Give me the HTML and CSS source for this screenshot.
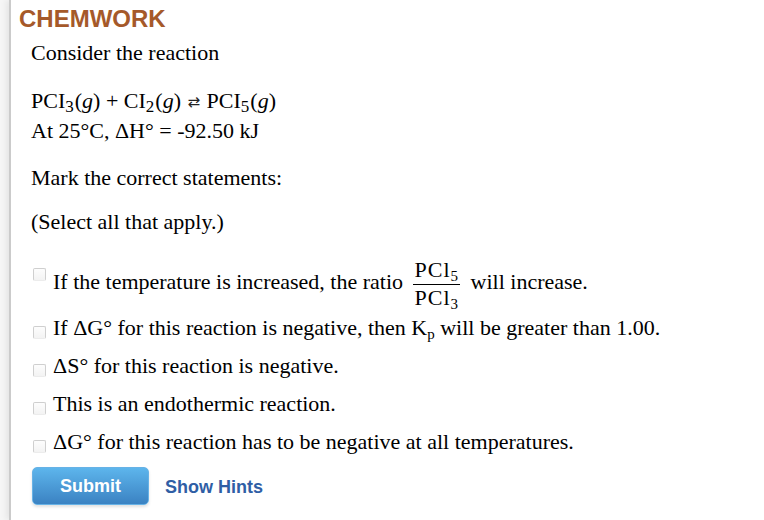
FILE: index.html
```html
<!DOCTYPE html>
<html>
<head>
<meta charset="utf-8">
<link rel="stylesheet" href="styles.css">
</head>
<body>
<div class="frame">
  <h1 class="brand">CHEMWORK</h1>
  <div class="content">
    <p class="line consider">Consider the reaction</p>
    <p class="line eq">PCI<sub>3</sub>(<i>g</i>) + CI<sub>2</sub>(<i>g</i>) <span class="arrows">⇄</span> PCI<sub>5</sub>(<i>g</i>)</p>
    <p class="line at">At 25°C, ΔH° = -92.50 kJ</p>
    <p class="line mark">Mark the correct statements:</p>
    <p class="line select">(Select all that apply.)</p>

    <div class="options">
      <label class="opt opt-first">
        <span class="box"></span>
        <span class="text">If the temperature is increased, the ratio <span class="frac"><span class="num">PCl<sub>5</sub></span><span class="den">PCl<sub>3</sub></span></span> will increase.</span>
      </label>
      <label class="opt">
        <span class="box"></span>
        <span class="text">If ΔG° for this reaction is negative, then K<sub>p</sub> will be greater than 1.00.</span>
      </label>
      <label class="opt">
        <span class="box"></span>
        <span class="text">ΔS° for this reaction is negative.</span>
      </label>
      <label class="opt">
        <span class="box"></span>
        <span class="text">This is an endothermic reaction.</span>
      </label>
      <label class="opt">
        <span class="box"></span>
        <span class="text">ΔG° for this reaction has to be negative at all temperatures.</span>
      </label>
    </div>

    <div class="actions">
      <button class="submit">Submit</button>
      <a class="hints">Show Hints</a>
    </div>
  </div>
</div>
</body>
</html>
```

FILE: styles.css
```css
html, body {
  margin: 0;
  padding: 0;
}
body {
  background: #f6f6f6;
  font-family: "Liberation Serif", "Times New Roman", serif;
  color: #000;
}
.frame {
  margin-left: 9px;
  border-left: 2px solid #cbcbcb;
  box-shadow: -3px 0 6px rgba(0, 0, 0, 0.07);
  background: #fff;
  min-height: 520px;
  padding-top: 5px;
  box-sizing: border-box;
}
.brand {
  margin: 0;
  padding-left: 8px;
  font-family: "Liberation Sans", Arial, sans-serif;
  font-weight: bold;
  font-size: 24px;
  line-height: 28px;
  color: #a5592a;
}
.content {
  padding-left: 20px;
}
.line {
  margin: 0;
  font-size: 22px;
  line-height: 26px;
}
.consider { margin-top: 7px; }
.eq { margin-top: 22px; }
.at { margin-top: 3px; }
.mark { margin-top: 21px; }
.select { margin-top: 18px; }

sub {
  font-size: 15px;
  line-height: 0;
  vertical-align: -4px;
}
.eq sub {
  font-size: 17px;
  margin-right: 1px;
}
.arrows {
  font-family: "DejaVu Sans", sans-serif;
  font-size: 15px;
  color: #222;
  vertical-align: 1px;
  margin: 0 1px;
}

.options {
  display: flex;
  flex-direction: column;
}
.opt {
  display: flex;
  align-items: flex-start;
  font-size: 22px;
  line-height: 26px;
  margin-top: 12px;
}
.opt-first {
  margin-top: 24px;
  margin-bottom: -6px;
}
.box {
  flex: none;
  width: 11px;
  height: 11px;
  margin: 11px 7px 0 2px;
  border: 1px solid #cfcfcf;
  border-bottom-color: #ececec;
  border-radius: 2px;
  background: linear-gradient(#fdfdfd, #f3f3f3);
}
.opt-first .box {
  margin-top: 9px;
}
.frac {
  display: inline-flex;
  flex-direction: column;
  vertical-align: middle;
  text-align: center;
  font-size: 22px;
  line-height: 22px;
  letter-spacing: 1px;
  margin: 0 5px 0 4px;
}
.frac sub {
  font-size: 15px;
  vertical-align: -4px;
  letter-spacing: 0;
}
.num {
  padding: 0 2px 3px;
  border-bottom: 1px solid #000;
}
.den {
  padding: 2px 2px 0;
}

.actions {
  display: flex;
  align-items: center;
  gap: 16px;
  margin-top: 12px;
}
.submit {
  margin-left: 1px;
  width: 117px;
  height: 38px;
  border: 1px solid #67b2e6;
  border-radius: 5px;
  background: linear-gradient(#5db5ec, #3b82c2);
  box-shadow: 0 2px 3px rgba(0, 0, 0, 0.12);
  color: #fff;
  font-family: "Liberation Sans", Arial, sans-serif;
  font-weight: bold;
  font-size: 18px;
  padding: 0;
}
.hints {
  font-family: "Liberation Sans", Arial, sans-serif;
  font-weight: bold;
  font-size: 18px;
  color: #2f5ea5;
  padding-top: 2px;
}
```
